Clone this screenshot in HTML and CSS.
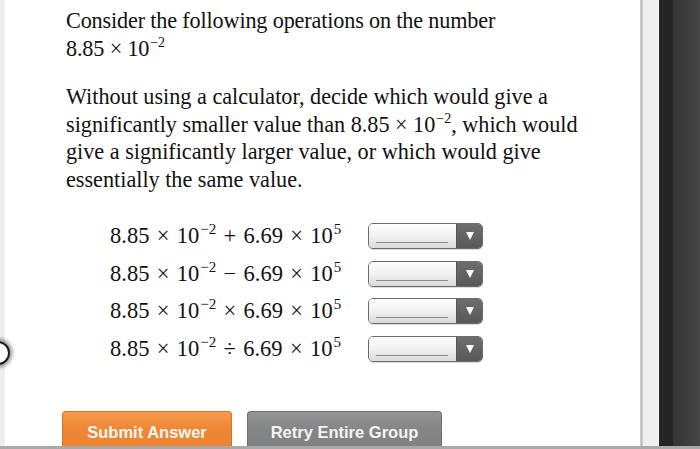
FILE: index.html
```html
<!DOCTYPE html>
<html>
<head>
<meta charset="utf-8">
<link rel="stylesheet" href="styles.css">
</head>
<body>
<div class="frame">
  <div class="stage">
    <div class="left-strip"></div>
    <main class="content">
      <p class="para first">Consider the following operations on the number<br>8.85 × 10<sup>−2</sup></p>
      <p class="para second">Without using a calculator, decide which would give a significantly smaller value than 8.85 × 10<sup>−2</sup>, which would give a significantly larger value, or which would give essentially the same value.</p>
      <div class="rows">
        <div class="math">8.85 × 10<sup>−2</sup> + 6.69 × 10<sup>5</sup></div>
        <div class="select"><span class="field"><span class="blank"></span></span><span class="arrow"></span></div>
        <div class="math">8.85 × 10<sup>−2</sup> − 6.69 × 10<sup>5</sup></div>
        <div class="select"><span class="field"><span class="blank"></span></span><span class="arrow"></span></div>
        <div class="math">8.85 × 10<sup>−2</sup> × 6.69 × 10<sup>5</sup></div>
        <div class="select"><span class="field"><span class="blank"></span></span><span class="arrow"></span></div>
        <div class="math">8.85 × 10<sup>−2</sup> ÷ 6.69 × 10<sup>5</sup></div>
        <div class="select"><span class="field"><span class="blank"></span></span><span class="arrow"></span></div>
      </div>
      <div class="buttons">
        <div class="btn submit">Submit Answer</div>
        <div class="btn retry">Retry Entire Group</div>
      </div>
      <div class="nav-dot"></div>
    </main>
    <div class="edge-line"></div>
    <div class="gutter"></div>
    <div class="dark-a"></div>
    <div class="dark-b"></div>
  </div>
  <div class="bottom-bar"></div>
</div>
</body>
</html>
```
FILE: styles.css
```css
html, body {
  margin: 0;
  padding: 0;
  width: 700px;
  height: 449px;
  overflow: hidden;
  background: #fff;
}
.frame {
  display: flex;
  flex-direction: column;
  width: 700px;
  height: 449px;
}
.stage {
  display: flex;
  height: 446px;
  overflow: hidden;
}
.left-strip {
  width: 5px;
  background: #eeeeee;
  flex: none;
}
.content {
  position: relative;
  width: 635px;
  flex: none;
  background: #fff;
  padding: 7px 0 0 61px;
  box-sizing: border-box;
  font-family: "Liberation Serif", "Times New Roman", serif;
  color: #111;
}
.para {
  margin: 0;
  font-size: 22.2px;
  line-height: 27.5px;
}
.para.first {
  width: 540px;
  letter-spacing: -0.15px;
}
.para.second {
  margin-top: 21px;
  width: 522px;
}
sup {
  font-size: 14px;
  line-height: 0;
  vertical-align: 9px;
  margin-left: 1px;
}
.rows {
  display: grid;
  grid-template-columns: 258px 115px;
  grid-auto-rows: 26px;
  row-gap: 11.5px;
  margin-top: 30px;
  margin-left: 44px;
  align-items: center;
}
.math {
  font-size: 22.5px;
  line-height: 26px;
  white-space: nowrap;
  word-spacing: 1.7px;
}
.math sup {
  font-size: 15px;
  vertical-align: 9px;
  word-spacing: 0;
}
.select {
  display: flex;
  height: 26px;
  box-sizing: border-box;
  border: 1px solid #6c6c6c;
  border-radius: 5px;
  overflow: hidden;
  box-shadow: 0 1px 1px rgba(0,0,0,0.15);
}
.field {
  flex: 1;
  position: relative;
  background: linear-gradient(#fdfdfd, #f1f1f1 50%, #dadada);
}
.blank {
  position: absolute;
  left: 7px;
  right: 8px;
  bottom: 5px;
  height: 1px;
  background: #8a8a8a;
}
.arrow {
  width: 25px;
  flex: none;
  background: linear-gradient(#6e6e6e, #585858);
  border-left: 1px solid #555;
  display: flex;
  align-items: center;
  justify-content: center;
}
.arrow::before {
  content: "";
  width: 0;
  height: 0;
  border-left: 4.5px solid transparent;
  border-right: 4.5px solid transparent;
  border-top: 8px solid #fff;
}
.buttons {
  display: flex;
  gap: 15px;
  margin-top: 49px;
  margin-left: -4px;
}
.btn {
  height: 44px;
  box-sizing: border-box;
  border-radius: 4px 4px 0 0;
  font-family: "Liberation Sans", Arial, sans-serif;
  font-weight: bold;
  font-size: 16.5px;
  color: #fbf6f0;
  text-align: center;
  padding-top: 11px;
}
.submit {
  width: 170px;
  background: linear-gradient(#f59a4b, #ee8735 40%, #ec8230);
  border: 1px solid #d97326;
  border-bottom: none;
}
.retry {
  width: 195px;
  background: linear-gradient(#949494, #858585 40%, #7f7f7f);
  border: 1px solid #6e6e6e;
  border-bottom: none;
  color: #f4f4f4;
}
.nav-dot {
  position: absolute;
  left: -19px;
  top: 341px;
  width: 20px;
  height: 20px;
  border-radius: 50%;
  background: #fff;
  border: 2px solid #1c1c1c;
  box-shadow: 0 0 4px 2px rgba(0,0,0,0.45);
}
.edge-line {
  width: 3px;
  flex: none;
  background: linear-gradient(90deg, #d6d6d6, #bcbcbc, #d9d9d9);
}
.gutter {
  width: 15px;
  flex: none;
  background: #efefef;
  border-right: 1px solid #f8f8f8;
}
.dark-a {
  width: 14px;
  flex: none;
  background: #252525;
}
.dark-b {
  flex: 1;
  background: linear-gradient(90deg, #333333, #3d3d3d 50%, #474747);
}
.bottom-bar {
  height: 3px;
  background: #a9a9a9;
}
```
